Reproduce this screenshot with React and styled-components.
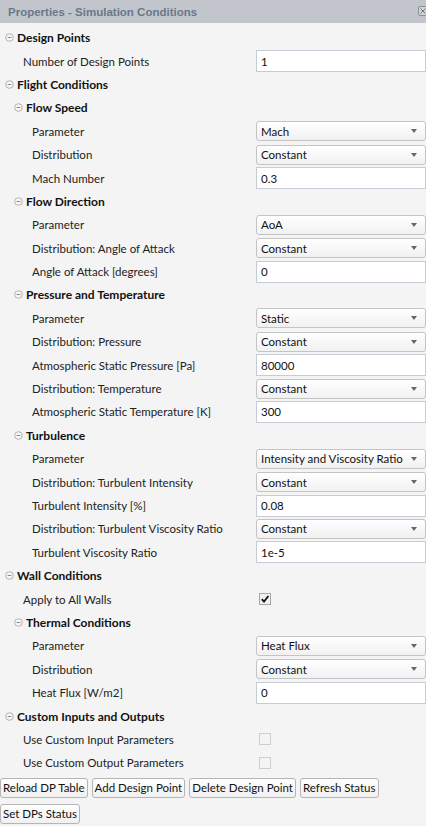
import React from "react";
import styled, { createGlobalStyle } from "styled-components";

const Global = createGlobalStyle`
  html, body { margin: 0; padding: 0; background: #f4f4f4; }
  body { font-family: Lato, "Liberation Sans", sans-serif; }
  * { box-sizing: border-box; }
`;

const Panel = styled.div`
  width: 426px;
  height: 826px;
  background: #f4f4f4;
  overflow: hidden;
  display: flex;
  flex-direction: column;
`;

const TitleBar = styled.div`
  height: 23px;
  background: #c2c6cc;
  display: flex;
  align-items: center;
  justify-content: space-between;
  padding: 0 0 0 8px;
  flex-shrink: 0;
`;

const TitleText = styled.span`
  font-family: "Liberation Sans", Arial, sans-serif;
  font-weight: bold;
  font-size: 11.5px;
  color: #6a7888;
`;

const CloseBox = styled.span`
  display: flex;
  margin-right: -2px;
  margin-top: -2px;
`;

const Tree = styled.div`
  padding-top: 3px;
  display: flex;
  flex-direction: column;
`;

const Row = styled.div`
  height: 23.4px;
  display: grid;
  grid-template-columns: 256px 170px;
  align-items: center;
`;

const HeaderRow = styled.div`
  height: 23.4px;
  display: flex;
  align-items: center;
  padding-left: ${(p) => (p.$level === 1 ? 5 : 14)}px;
  gap: 2px;
`;

const HeaderText = styled.span`
  font-weight: bold;
  font-size: 12px;
  color: #111;
  margin-left: 1px;
`;

const Label = styled.span`
  font-size: 11.5px;
  color: #222;
  padding-left: ${(p) => (p.$level === 1 ? 23 : 32)}px;
  white-space: nowrap;
`;

const TextBox = styled.div`
  height: 22px;
  background: #fff;
  border: 1px solid #c5ccd6;
  display: flex;
  align-items: center;
  padding-left: 4px;
  font-size: 11.5px;
  color: #111;
`;

const Select = styled.div`
  height: 20px;
  background: linear-gradient(#ffffff, #f1f1f1);
  border: 1px solid #c4c4c4;
  border-radius: 3px;
  display: flex;
  align-items: center;
  justify-content: space-between;
  padding: 0 8px 0 4px;
  font-size: 11.5px;
  color: #111;
`;

const Arrow = styled.span`
  width: 0;
  height: 0;
  flex-shrink: 0;
  border-left: 3.5px solid transparent;
  border-right: 3.5px solid transparent;
  border-top: 4px solid #666;
`;

const CheckCell = styled.div`
  padding-left: 3px;
  display: flex;
  align-items: center;
`;

const CheckBox = styled.span`
  width: 12px;
  height: 12px;
  border: 1px solid ${(p) => (p.$checked ? "#a8a8a8" : "#cfcfcf")};
  background: ${(p) => (p.$checked ? "#f0f0f0" : "#f4f4f4")};
  display: flex;
  align-items: center;
  justify-content: center;
`;

const ButtonArea = styled.div`
  display: flex;
  flex-wrap: wrap;
  gap: 6px 4px;
  padding-top: 3px;
`;

const ActionButton = styled.button`
  height: 20px;
  padding: 0 2px;
  font-family: Lato, "Liberation Sans", sans-serif;
  font-size: 11.5px;
  color: #111;
  background: linear-gradient(#ffffff, #f0f0f0);
  border: 1px solid #b5b5b5;
  border-radius: 3px;
  display: flex;
  align-items: center;
  white-space: nowrap;
`;

const Collapse = () => (
  <svg width="9" height="9" viewBox="0 0 9 9">
    <circle cx="4.5" cy="4.5" r="3.8" fill="#f7f7f7" stroke="#a9a9a9" strokeWidth="0.9" />
    <line x1="2.6" y1="4.5" x2="6.4" y2="4.5" stroke="#8a8a8a" strokeWidth="1" />
  </svg>
);

const CloseIcon = () => (
  <svg width="10" height="10" viewBox="0 0 10 10">
    <rect x="0.5" y="0.5" width="9" height="9" rx="1.5" fill="#d0d3d8" stroke="#8d9096" />
    <path d="M2.5 2.5 L7.5 7.5 M7.5 2.5 L2.5 7.5" stroke="#777" strokeWidth="1" />
  </svg>
);

const Check = () => (
  <svg width="10" height="10" viewBox="0 0 10 10">
    <path d="M1.8 5.2 L4 7.6 L8.4 2" fill="none" stroke="#111" strokeWidth="1.8" />
  </svg>
);

const rows = [
  { t: "h", l: 1, text: "Design Points" },
  { t: "text", l: 1, label: "Number of Design Points", value: "1" },
  { t: "h", l: 1, text: "Flight Conditions" },
  { t: "h", l: 2, text: "Flow Speed" },
  { t: "sel", l: 2, label: "Parameter", value: "Mach" },
  { t: "sel", l: 2, label: "Distribution", value: "Constant" },
  { t: "text", l: 2, label: "Mach Number", value: "0.3" },
  { t: "h", l: 2, text: "Flow Direction" },
  { t: "sel", l: 2, label: "Parameter", value: "AoA" },
  { t: "sel", l: 2, label: "Distribution: Angle of Attack", value: "Constant" },
  { t: "text", l: 2, label: "Angle of Attack [degrees]", value: "0" },
  { t: "h", l: 2, text: "Pressure and Temperature" },
  { t: "sel", l: 2, label: "Parameter", value: "Static" },
  { t: "sel", l: 2, label: "Distribution: Pressure", value: "Constant" },
  { t: "text", l: 2, label: "Atmospheric Static Pressure [Pa]", value: "80000" },
  { t: "sel", l: 2, label: "Distribution: Temperature", value: "Constant" },
  { t: "text", l: 2, label: "Atmospheric Static Temperature [K]", value: "300" },
  { t: "h", l: 2, text: "Turbulence" },
  { t: "sel", l: 2, label: "Parameter", value: "Intensity and Viscosity Ratio" },
  { t: "sel", l: 2, label: "Distribution: Turbulent Intensity", value: "Constant" },
  { t: "text", l: 2, label: "Turbulent Intensity [%]", value: "0.08" },
  { t: "sel", l: 2, label: "Distribution: Turbulent Viscosity Ratio", value: "Constant" },
  { t: "text", l: 2, label: "Turbulent Viscosity Ratio", value: "1e-5" },
  { t: "h", l: 1, text: "Wall Conditions" },
  { t: "chk", l: 1, label: "Apply to All Walls", checked: true },
  { t: "h", l: 2, text: "Thermal Conditions" },
  { t: "sel", l: 2, label: "Parameter", value: "Heat Flux" },
  { t: "sel", l: 2, label: "Distribution", value: "Constant" },
  { t: "text", l: 2, label: "Heat Flux [W/m2]", value: "0" },
  { t: "h", l: 1, text: "Custom Inputs and Outputs" },
  { t: "chk", l: 1, label: "Use Custom Input Parameters", checked: false },
  { t: "chk", l: 1, label: "Use Custom Output Parameters", checked: false },
];

const buttons = ["Reload DP Table", "Add Design Point", "Delete Design Point", "Refresh Status", "Set DPs Status"];

export default function App() {
  return (
    <>
      <Global />
      <Panel>
        <TitleBar>
          <TitleText>Properties - Simulation Conditions</TitleText>
          <CloseBox>
            <CloseIcon />
          </CloseBox>
        </TitleBar>
        <Tree>
          {rows.map((r, i) => {
            if (r.t === "h")
              return (
                <HeaderRow key={i} $level={r.l}>
                  <Collapse />
                  <HeaderText>{r.text}</HeaderText>
                </HeaderRow>
              );
            return (
              <Row key={i}>
                <Label $level={r.l}>{r.label}</Label>
                {r.t === "text" && <TextBox>{r.value}</TextBox>}
                {r.t === "sel" && (
                  <Select>
                    <span>{r.value}</span>
                    <Arrow />
                  </Select>
                )}
                {r.t === "chk" && (
                  <CheckCell>
                    <CheckBox $checked={r.checked}>{r.checked && <Check />}</CheckBox>
                  </CheckCell>
                )}
              </Row>
            );
          })}
        </Tree>
        <ButtonArea>
          {buttons.map((b) => (
            <ActionButton key={b}>{b}</ActionButton>
          ))}
        </ButtonArea>
      </Panel>
    </>
  );
}
